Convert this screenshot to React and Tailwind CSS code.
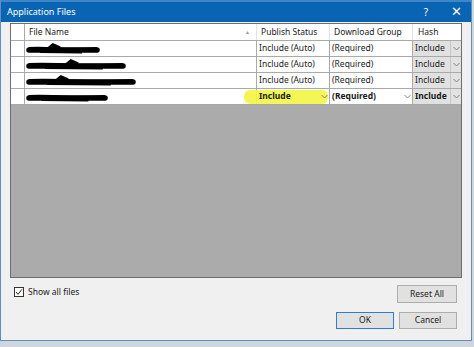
import React from "react";

const Chevron = () => (
  <svg width="7" height="5" viewBox="0 0 7 5" className="block">
    <path d="M0.5 1 L3.5 4 L6.5 1" fill="none" stroke="#7a7a7a" strokeWidth="0.9" />
  </svg>
);

const Scribble = ({ w, bump }) => (
  <svg width={w + 4} height="14" viewBox={`0 0 ${w + 4} 14`} className="block">
    <path d={`M3 8 L${w + 1} 8`} stroke="#000" strokeWidth="5.5" strokeLinecap="round" />
    <path d={`M3 7 C ${w * 0.3} 5.5, ${w * 0.6} 9.5, ${w + 1} 7`} stroke="#000" strokeWidth="4" fill="none" />
    <path d={`M${w * 0.2} 9.5 L${w * 0.8} 10`} stroke="#000" strokeWidth="3" />
    {bump && <path d={`M${bump} 7 L${bump + 5} 3 L${bump + 12} 6`} stroke="#000" strokeWidth="3.5" fill="#000" />}
  </svg>
);

const rows = [
  { w: 70, bump: 22 },
  { w: 96, bump: 40 },
  { w: 106, bump: 30 },
  { w: 78, bump: null },
];

export default function App() {
  return (
    <div
      className="w-[474px] h-[347px] bg-[#cfd6dd] overflow-hidden relative"
      style={{ fontFamily: '"Noto Sans", "Open Sans", sans-serif' }}
    >
      <div className="w-[472px] h-[341px] bg-[#f0f0f0] border-l border-r border-b border-[#5f8fbf] flex flex-col">
        <div className="h-[2px] bg-[#3f86c8]" />
        <div className="h-[20px] bg-[#0a64b4] flex items-center text-white text-[9px] pl-[6px]">
          <span className="flex-1">Application Files</span>
          <span className="w-[14px] text-center text-[10px] mr-[16px]">?</span>
          <span className="w-[14px] text-center text-[13px] font-light mr-[8px]">✕</span>
        </div>
        <div className="pt-[1px] pl-[9px]">
          <div className="w-[452px] h-[255px] border border-[#6e6e6e] flex flex-col bg-[#ababab] text-[8.5px] text-[#1a1a1a] leading-none">
            {/* header */}
            <div className="flex h-[17px] bg-white border-b border-[#a9a9a9]">
              <div className="w-[14px] border-r border-[#a9a9a9]" />
              <div className="w-[232px] border-r border-[#e3e3e3] flex items-center pl-[4px] relative">
                <span className="flex-1">File Name</span>
                <span className="text-[5px] text-[#9a9a9a] mr-[6px]">▲</span>
              </div>
              <div className="w-[73px] border-r border-[#e3e3e3] flex items-center pl-[4px]">Publish Status</div>
              <div className="w-[83px] border-r border-[#e3e3e3] flex items-center pl-[4px]">Download Group</div>
              <div className="flex-1 flex items-center pl-[5px]">Hash</div>
            </div>
            {rows.map((r, i) => {
              const last = i === 3;
              return (
                <div key={i} className={`flex h-[16px] bg-white border-b border-[#a9a9a9] ${last ? "font-bold" : ""}`}>
                  <div className="w-[14px] border-r border-[#a9a9a9]" />
                  <div className="w-[232px] border-r border-[#a9a9a9] flex items-center pl-[1px]">
                    <Scribble w={r.w} bump={r.bump} />
                  </div>
                  <div className="w-[73px] border-r border-[#a9a9a9] flex items-center relative">
                    {last && (
                      <div className="absolute left-[-13px] top-[1px] w-[84px] h-[14px] bg-[#f2f542] rounded-[6px] opacity-90" />
                    )}
                    <span className="relative pl-[2px] flex-1">{last ? "Include" : "Include (Auto)"}</span>
                    {last && (
                      <span className="relative w-[10px] flex justify-center">
                        <Chevron />
                      </span>
                    )}
                  </div>
                  <div className="w-[83px] border-r border-[#a9a9a9] flex items-center">
                    <span className="pl-[2px] flex-1">(Required)</span>
                    {last && (
                      <span className="w-[10px] flex justify-center">
                        <Chevron />
                      </span>
                    )}
                  </div>
                  <div className="flex-1 flex items-center bg-[#e1e1e1]">
                    <span className="pl-[2px] flex-1">Include</span>
                    <span className="w-[11px] h-full border-l border-[#c8c8c8] flex items-center justify-center">
                      <Chevron />
                    </span>
                  </div>
                </div>
              );
            })}
            <div className="flex-1" />
          </div>
        </div>
        <div className="flex justify-between pl-[13px] pr-[14px] pt-[7px]">
          <div className="flex items-start pt-[2px] gap-[4px]">
            <div className="w-[10px] h-[10px] border border-[#333] bg-white flex items-center justify-center">
              <svg width="8" height="8" viewBox="0 0 8 8">
                <path d="M1 4 L3 6.3 L7 1.3" fill="none" stroke="#222" strokeWidth="1" />
              </svg>
            </div>
            <span className="text-[8.5px] leading-[10px] text-[#1a1a1a]">Show all files</span>
          </div>
          <div className="w-[60px] h-[18px] bg-[#e1e1e1] border border-[#adadad] text-[8.5px] flex items-center justify-center text-[#1a1a1a]">
            Reset All
          </div>
        </div>
        <div className="flex justify-end gap-[5px] pr-[14px] pt-[9px]">
          <div className="w-[58px] h-[17px] bg-[#e1e1e1] border border-[#2a7fd4] text-[8.5px] flex items-center justify-center text-[#1a1a1a]">
            OK
          </div>
          <div className="w-[58px] h-[17px] bg-[#e1e1e1] border border-[#adadad] text-[8.5px] flex items-center justify-center text-[#1a1a1a]">
            Cancel
          </div>
        </div>
      </div>
    </div>
  );
}
